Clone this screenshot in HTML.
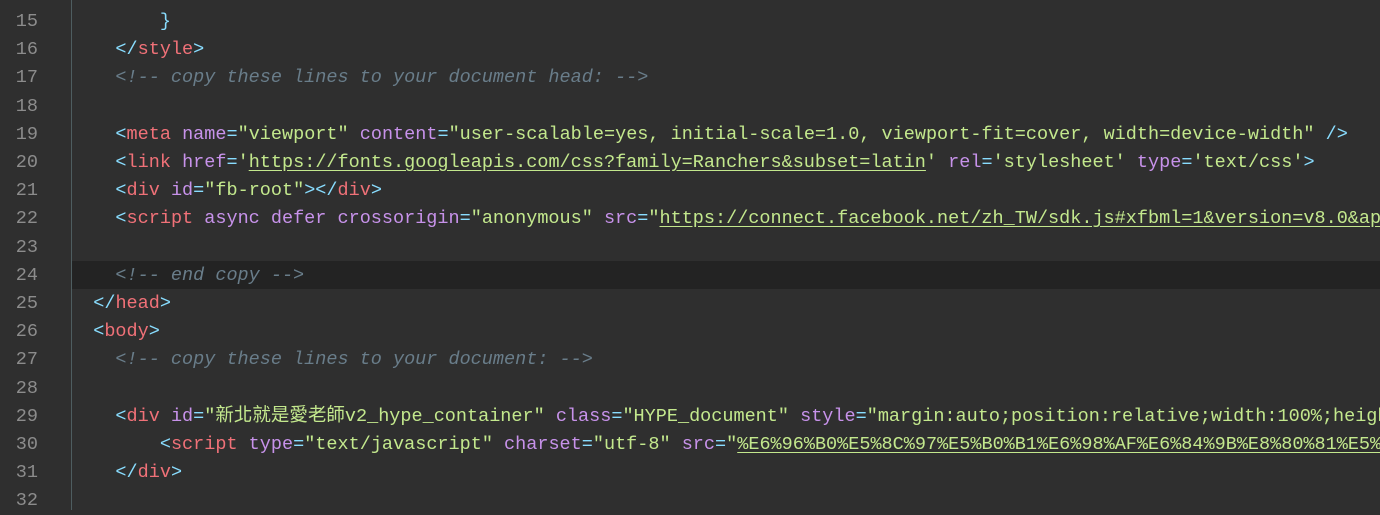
<!DOCTYPE html>
<html><head><meta charset="utf-8"><style>
body{margin:0;width:1380px;height:510px;overflow:hidden;background:#2f2f2f;font-family:"Liberation Mono","Noto Sans CJK TC",monospace;font-size:18.5px;}
.ln{position:absolute;left:0;width:38px;text-align:right;color:#8c8c8c;}
.l{position:absolute;left:71px;white-space:pre;color:#c8c8c8;height:28px;line-height:28px;}
.row{position:absolute;left:0;width:1380px;height:28px;line-height:28px;margin-top:3px;}
.div{position:absolute;left:71px;top:0;width:1px;height:510px;background:#4e5d60;}
.hl{position:absolute;left:72px;width:1308px;height:28px;background:#232323;}
.t{color:#f07178}.b{color:#89ddff}.a{color:#c792ea}.s{color:#c3e88d}.u{text-decoration:underline;text-underline-offset:3px}
.c{color:#697d8a;font-style:italic}
</style></head><body>
<div class="hl" style="top:261px"></div>
<div class="div"></div>
<div class="row" style="top:5px"><span class="ln">15</span><span class="l">        <span class="b">}</span></span></div>
<div class="row" style="top:33px"><span class="ln">16</span><span class="l">    <span class="b">&lt;/</span><span class="t">style</span><span class="b">&gt;</span></span></div>
<div class="row" style="top:61px"><span class="ln">17</span><span class="l">    <span class="c">&lt;!-- copy these lines to your document head: --&gt;</span></span></div>
<div class="row" style="top:90px"><span class="ln">18</span></div>
<div class="row" style="top:118px"><span class="ln">19</span><span class="l">    <span class="b">&lt;</span><span class="t">meta</span> <span class="a">name</span><span class="b">=</span><span class="s">"viewport"</span> <span class="a">content</span><span class="b">=</span><span class="s">"user-scalable=yes, initial-scale=1.0, viewport-fit=cover, width=device-width"</span> <span class="b">/&gt;</span></span></div>
<div class="row" style="top:146px"><span class="ln">20</span><span class="l">    <span class="b">&lt;</span><span class="t">link</span> <span class="a">href</span><span class="b">=</span><span class="s">'<span class="u">https://fonts.googleapis.com/css?family=Ranchers&amp;subset=latin</span>'</span> <span class="a">rel</span><span class="b">=</span><span class="s">'stylesheet'</span> <span class="a">type</span><span class="b">=</span><span class="s">'text/css'</span><span class="b">&gt;</span></span></div>
<div class="row" style="top:174px"><span class="ln">21</span><span class="l">    <span class="b">&lt;</span><span class="t">div</span> <span class="a">id</span><span class="b">=</span><span class="s">"fb-root"</span><span class="b">&gt;&lt;/</span><span class="t">div</span><span class="b">&gt;</span></span></div>
<div class="row" style="top:202px"><span class="ln">22</span><span class="l">    <span class="b">&lt;</span><span class="t">script</span> <span class="a">async defer crossorigin</span><span class="b">=</span><span class="s">"anonymous"</span> <span class="a">src</span><span class="b">=</span><span class="s">"<span class="u">https://connect.facebook.net/zh_TW/sdk.js#xfbml=1&amp;version=v8.0&amp;appId</span></span></span></div>
<div class="row" style="top:231px"><span class="ln">23</span></div>
<div class="row" style="top:259px"><span class="ln">24</span><span class="l">    <span class="c">&lt;!-- end copy --&gt;</span></span></div>
<div class="row" style="top:287px"><span class="ln">25</span><span class="l">  <span class="b">&lt;/</span><span class="t">head</span><span class="b">&gt;</span></span></div>
<div class="row" style="top:315px"><span class="ln">26</span><span class="l">  <span class="b">&lt;</span><span class="t">body</span><span class="b">&gt;</span></span></div>
<div class="row" style="top:343px"><span class="ln">27</span><span class="l">    <span class="c">&lt;!-- copy these lines to your document: --&gt;</span></span></div>
<div class="row" style="top:372px"><span class="ln">28</span></div>
<div class="row" style="top:400px"><span class="ln">29</span><span class="l">    <span class="b">&lt;</span><span class="t">div</span> <span class="a">id</span><span class="b">=</span><span class="s">"新北就是愛老師v2_hype_container"</span> <span class="a">class</span><span class="b">=</span><span class="s">"HYPE_document"</span> <span class="a">style</span><span class="b">=</span><span class="s">"margin:auto;position:relative;width:100%;height</span></span></div>
<div class="row" style="top:428px"><span class="ln">30</span><span class="l">        <span class="b">&lt;</span><span class="t">script</span> <span class="a">type</span><span class="b">=</span><span class="s">"text/javascript"</span> <span class="a">charset</span><span class="b">=</span><span class="s">"utf-8"</span> <span class="a">src</span><span class="b">=</span><span class="s">"<span class="u">%E6%96%B0%E5%8C%97%E5%B0%B1%E6%98%AF%E6%84%9B%E8%80%81%E5%B8</span></span></span></div>
<div class="row" style="top:456px"><span class="ln">31</span><span class="l">    <span class="b">&lt;/</span><span class="t">div</span><span class="b">&gt;</span></span></div>
<div class="row" style="top:484px"><span class="ln">32</span></div>
</body></html>
